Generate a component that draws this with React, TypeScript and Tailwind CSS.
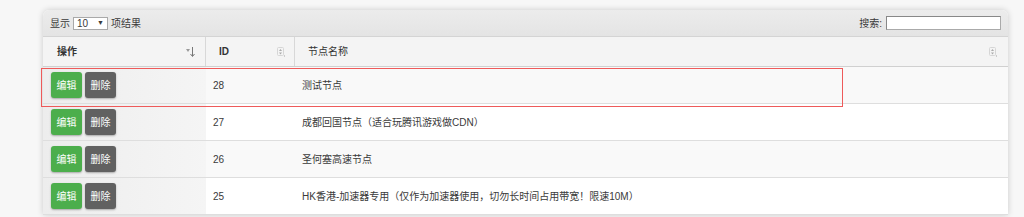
import React from 'react';

const rows = [
  { id: 28, name: '测试节点' },
  { id: 27, name: '成都回国节点（适合玩腾讯游戏做CDN）' },
  { id: 26, name: '圣何塞高速节点' },
  { id: 25, name: 'HK香港-加速器专用（仅作为加速器使用，切勿长时间占用带宽！限速10M）' },
];

function SortIcon({ desc = false }: { desc?: boolean }) {
  if (desc) {
    return (
      <svg width="10" height="12" viewBox="0 0 10 12" className="shrink-0">
        <path d="M1 3h4L3 6z" fill="#999" />
        <path d="M7.5 1v9M5.5 8l2 2.5 2-2.5" stroke="#777" strokeWidth="1" fill="none" />
      </svg>
    );
  }
  return (
    <svg width="10" height="12" viewBox="0 0 10 12" className="shrink-0">
      <rect x="1.5" y="1.5" width="6" height="8" rx="1" fill="none" stroke="#d6d6d6" />
      <path d="M3 5l1.5-2 1.5 2zM3 6.5l1.5 2 1.5-2z" fill="#aaa" />
      <path d="M8.5 9v2" stroke="#ccc" />
    </svg>
  );
}

export default function App() {
  return (
    <div
      className="w-[1024px] h-[217px] overflow-hidden bg-[#f7f7f7] pt-[10px] pl-[43px] text-[10px] text-[#3a3a3a]"
      style={{ fontFamily: 'Arial, "Liberation Sans", "Noto Sans CJK SC", sans-serif' }}
    >
      <div className="relative w-[965px] bg-white rounded-t-[6px] shadow-[0_0_6px_rgba(0,0,0,0.18)]">
        <div className="h-[27px] flex items-center justify-between px-[7px] rounded-t-[6px] bg-gradient-to-b from-[#ececec] to-[#e4e4e4] border-b border-[#d4d4d4]">
          <div className="flex items-center gap-[3px]">
            <span>显示</span>
            <div className="w-[35px] h-[13px] border border-[#a9a9a9] bg-white flex items-center justify-between px-[3px]">
              <span>10</span>
              <span className="text-[7px]">▼</span>
            </div>
            <span>项结果</span>
          </div>
          <div className="flex items-center gap-[4px]">
            <span>搜索:</span>
            <div className="w-[115px] h-[14px] border border-[#aaa] border-t-[#888] border-l-[#888] bg-white" />
          </div>
        </div>

        <div className="h-[30px] flex bg-[#f4f4f4] border-b border-[#d0d0d0] text-[#333]">
          <div className="w-[163px] flex items-center justify-between pl-[14px] pr-[10px] border-r border-[#d8d8d8] font-bold">
            <span>操作</span>
            <SortIcon desc />
          </div>
          <div className="w-[89px] flex items-center justify-between pl-[13px] pr-[8px] border-r border-[#d8d8d8] font-bold">
            <span>ID</span>
            <SortIcon />
          </div>
          <div className="flex-1 flex items-center justify-between pl-[13px] pr-[10px]">
            <span>节点名称</span>
            <SortIcon />
          </div>
        </div>

        {rows.map((r, i) => (
          <div
            key={r.id}
            className={`h-[37px] flex border-b border-[#dedede] ${i % 2 === 0 ? 'bg-[#f9f9f9]' : 'bg-white'}`}
          >
            <div className="w-[163px] flex items-center gap-[3px] pl-[8px] bg-gradient-to-r from-[#ededed] to-[#f5f5f5]">
              <span className="w-[31px] h-[26px] flex items-center justify-center rounded-[3px] bg-[#4cae4c] text-white shadow-[0_1px_2px_rgba(0,0,0,0.3)]">
                编辑
              </span>
              <span className="w-[31px] h-[26px] flex items-center justify-center rounded-[3px] bg-[#616161] text-white shadow-[0_1px_2px_rgba(0,0,0,0.3)]">
                删除
              </span>
            </div>
            <div className="w-[89px] flex items-center pl-[7px]">{r.id}</div>
            <div className="flex-1 flex items-center pl-[7px]">{r.name}</div>
          </div>
        ))}

        <div className="absolute left-[-2px] top-[58px] w-[802px] h-[39px] border border-[#ee5a5a] pointer-events-none" />
      </div>
    </div>
  );
}
